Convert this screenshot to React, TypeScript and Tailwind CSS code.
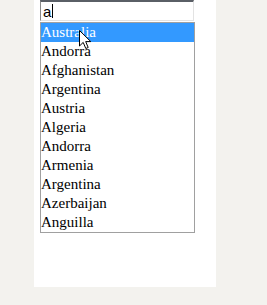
import React from "react";

const countries = [
  "Australia",
  "Andorra",
  "Afghanistan",
  "Argentina",
  "Austria",
  "Algeria",
  "Andorra",
  "Armenia",
  "Argentina",
  "Azerbaijan",
  "Anguilla",
];

function Pointer() {
  return (
    <svg
      width="13"
      height="20"
      viewBox="0 0 13 20"
      className="absolute left-[79px] top-[30px]"
    >
      <path
        d="M0.5 0.5 L0.5 16 L4.2 12.4 L6.8 18.5 L9.2 17.5 L6.7 11.6 L11.8 11.6 Z"
        fill="#fff"
        stroke="#000"
        strokeWidth="1"
        strokeLinejoin="miter"
      />
    </svg>
  );
}

export default function App() {
  return (
    <div className="w-[267px] h-[305px] bg-[#f3f2ee] relative overflow-hidden">
      <div className="ml-[34px] w-[182px] h-[287px] bg-white pl-[6px]">
        {/* search box */}
        <div className="w-[154px] h-[21px] border-t-2 border-l border-t-[#5a5f66] border-l-[#8a8a8a] border-r border-b border-r-[#e3e3e3] border-b-[#e3e3e3] flex items-center pl-[2px]">
          <span className="text-[15px] leading-none text-black font-['Liberation_Sans',Arial,sans-serif]">a</span>
          <span className="w-px h-[14px] bg-black ml-px" />
        </div>
        {/* suggestions */}
        <div className="mt-px w-[155px] border border-[#a0a0a0] bg-white">
          {countries.map((c, i) => (
            <div
              key={i}
              className={`h-[19px] leading-[19px] text-[15px] font-['Liberation_Serif','Times_New_Roman',serif] ${
                i === 0 ? "bg-[#3399ff] text-white" : "text-black"
              }`}
            >
              {c}
            </div>
          ))}
        </div>
      </div>
      <Pointer />
    </div>
  );
}
